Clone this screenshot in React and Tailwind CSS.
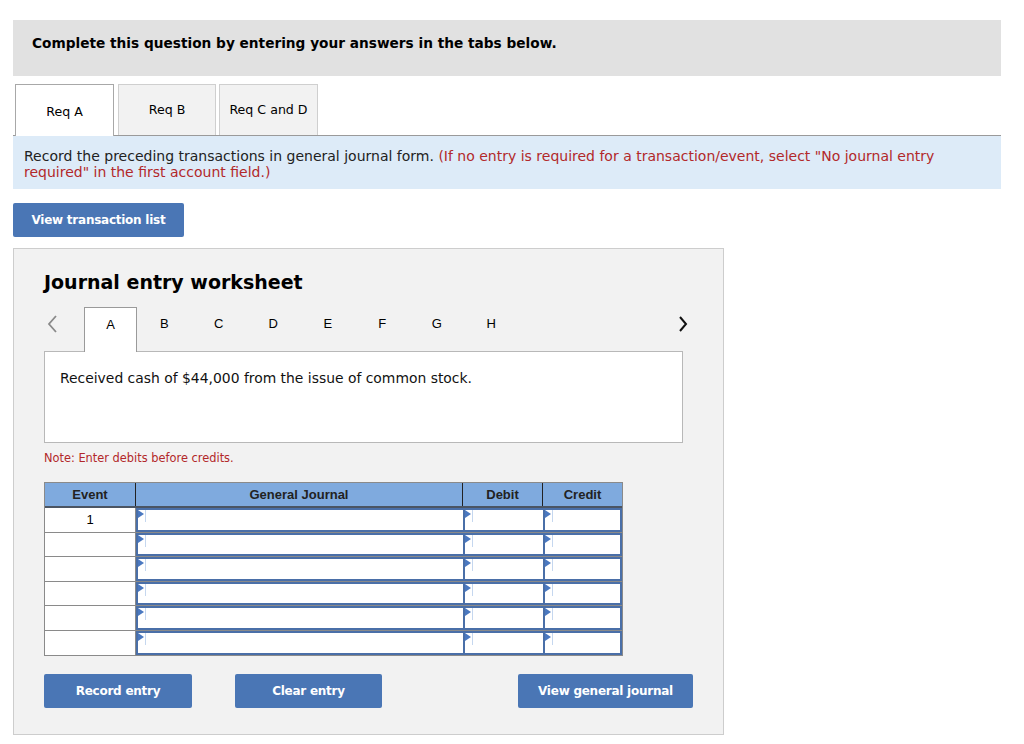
import React from "react"

const verdana = { fontFamily: '"DejaVu Sans", Verdana, sans-serif' }

const letters = ["A", "B", "C", "D", "E", "F", "G", "H"]

const InputCell = ({ w, last }) => (
    <div className={`relative h-full bg-white border-2 border-[#4a6fa8] ${w} ${last ? "" : "border-r-0"}`}>
        <span className="absolute left-0 top-0 w-0 h-0 border-t-[4px] border-b-[4px] border-l-[6px] border-t-transparent border-b-transparent border-l-[#4a78c0]" />
        <span className="absolute left-[7px] top-0 w-px h-[12px] bg-[#c5d7ef]" />
    </div>
)

const App = () => {
    return (
        <div className="min-h-[744px] bg-white pt-[20px] pl-[13px] w-[1024px]" style={verdana}>
            <div className="w-[988px] h-[56px] bg-[#e1e1e1] pl-[19px] pt-[15px]">
                <p className="text-[13.7px] leading-[16px] font-bold text-black">Complete this question by entering your answers in the tabs below.</p>
            </div>

            <div className="w-[988px] mt-[8px] flex pl-[2px] border-b border-[#9a9a9a] h-[52px]">
                <div className="w-[99px] h-[52px] bg-white border border-[#a8a8a8] border-b-0 flex items-center justify-center pt-[3px] text-[12.6px] text-black -mb-px">Req A</div>
                <div className="ml-[4px] w-[98px] h-[51px] bg-[#f2f2f2] border border-[#cfcfcf] border-b-0 flex items-center justify-center text-[12.6px] text-black">Req B</div>
                <div className="ml-[3px] w-[99px] h-[51px] bg-[#f2f2f2] border border-[#cfcfcf] border-b-0 flex items-center justify-center text-[12.6px] text-black">Req C and D</div>
            </div>

            <div className="w-[988px] h-[53px] bg-[#ddebf8] px-[11px] pt-[12px] text-[14px] leading-[16px] text-[#222]">
                <p className="w-[935px]">Record the preceding transactions in general journal form. <span className="text-[#b2282a]">(If no entry is required for a transaction/event, select "No journal entry required" in the first account field.)</span></p>
            </div>

            <button className="mt-[14px] w-[171px] h-[34px] bg-[#4a76b5] rounded-[2px] text-white text-[12px] tracking-[-0.25px] font-bold">View transaction list</button>

            <div className="mt-[11px] w-[711px] h-[487px] bg-[#f2f2f2] border border-[#cdcdcd] pl-[30px] pr-[40px]">
                <h2 className="mt-[21px] text-[19px] font-bold text-black leading-[24px]">Journal entry worksheet</h2>

                <div className="mt-[13px] h-[44px] flex items-stretch relative" style={{ fontFamily: '"Liberation Sans", Arial, sans-serif' }}>
                    <div className="w-[40px] flex items-start pt-[7px] pl-[2px]">
                        <svg width="12" height="20" viewBox="0 0 12 20"><path d="M10 2 L3 10 L10 18" fill="none" stroke="#8a8a8a" strokeWidth="1.8" /></svg>
                    </div>
                    {letters.map((l, i) => (
                        <div key={l} className={`flex justify-center pt-[9px] text-[13px] leading-[16px] text-black ${i === 0 ? "w-[53px] bg-white border border-[#9a9a9a] border-b-0 -mb-px z-10" : "w-[54.5px]"}`}>{l}</div>
                    ))}
                    <div className="flex-1 flex items-start justify-end pt-[7px]">
                        <svg width="12" height="20" viewBox="0 0 12 20" className="-mr-[6px]"><path d="M3 3 L9 10 L3 17" fill="none" stroke="#111" strokeWidth="2" /></svg>
                    </div>
                </div>

                <div className="w-[639px] h-[92px] bg-white border border-[#b8b8b8] px-[15px] pt-[16px] text-[13.9px] text-[#111]">
                    Received cash of $44,000 from the issue of common stock.
                </div>

                <p className="mt-[7px] text-[11.4px] leading-[16px] text-[#b2282a]">Note: Enter debits before credits.</p>

                <div className="mt-[16px] w-[579px] border border-[#8a8a8a]" style={{ fontFamily: '"Liberation Sans", Arial, sans-serif' }}>
                    <div className="flex h-[25px] bg-[#7faade] border-b-2 border-[#4b5563] text-[13px] font-bold text-[#222]">
                        <div className="w-[91px] flex items-center justify-center border-r border-[#222]">Event</div>
                        <div className="w-[327px] flex items-center justify-center border-r border-[#222]">General Journal</div>
                        <div className="w-[80px] flex items-center justify-center border-r border-[#222]">Debit</div>
                        <div className="flex-1 flex items-center justify-center">Credit</div>
                    </div>
                    {[0, 1, 2, 3, 4, 5].map((r) => (
                        <div key={r} className={`flex h-[24.5px] ${r < 5 ? "border-b border-[#8a8a8a]" : ""}`}>
                            <div className="w-[91px] bg-white border-r border-[#8a8a8a] flex items-center justify-center text-[13px] text-black">{r === 0 ? "1" : ""}</div>
                            <InputCell w="w-[327px]" />
                            <InputCell w="w-[80px]" />
                            <InputCell w="flex-1" last />
                        </div>
                    ))}
                </div>

                <div className="mt-[18px] flex w-[649px]">
                    <button className="w-[148px] h-[34px] bg-[#4a76b5] rounded-[2px] text-white text-[12px] tracking-[-0.25px] font-bold">Record entry</button>
                    <button className="ml-[43px] w-[147px] h-[34px] bg-[#4a76b5] rounded-[2px] text-white text-[12px] tracking-[-0.25px] font-bold">Clear entry</button>
                    <button className="ml-auto w-[175px] h-[34px] bg-[#4a76b5] rounded-[2px] text-white text-[12px] tracking-[-0.25px] font-bold">View general journal</button>
                </div>
            </div>
        </div>
    )
}

export default App
